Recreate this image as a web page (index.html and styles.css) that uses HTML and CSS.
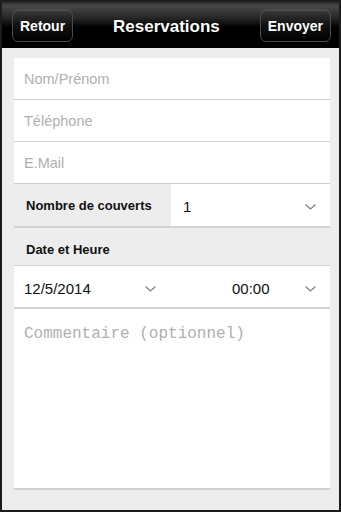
FILE: index.html
```html
<!DOCTYPE html>
<html lang="fr">
<head>
    <meta charset="UTF-8">
    <meta name="viewport" content="width=device-width, initial-scale=1.0">
    <title>Reservations</title>
    <link rel="stylesheet" href="styles.css">
</head>
<body>
    <div class="header">
        <button class="head-btn">Retour</button>
        <h1>Reservations</h1>
        <button class="head-btn">Envoyer</button>
    </div>
    <form class="content">
        <input class="field" type="text" placeholder="Nom/Prénom">
        <input class="field" type="tel" placeholder="Téléphone">
        <input class="field" type="email" placeholder="E.Mail">
        <div class="row covers">
            <label class="row-label" for="couverts">Nombre de couverts</label>
            <div class="select-box">
                <select id="couverts" class="select">
                    <option>1</option>
                    <option>2</option>
                    <option>3</option>
                    <option>4</option>
                </select>
                <svg class="chevron" width="11" height="6" viewBox="0 0 11 6"><path d="M0.5 0.5 L5.5 5 L10.5 0.5" fill="none" stroke="#808080" stroke-width="1.2"/></svg>
            </div>
        </div>
        <div class="section-label">Date et Heure</div>
        <div class="row datetime">
            <div class="select-box date-box">
                <select class="select">
                    <option>12/5/2014</option>
                </select>
                <svg class="chevron" width="11" height="6" viewBox="0 0 11 6"><path d="M0.5 0.5 L5.5 5 L10.5 0.5" fill="none" stroke="#808080" stroke-width="1.2"/></svg>
            </div>
            <div class="select-box time-box">
                <select class="select">
                    <option>00:00</option>
                </select>
                <svg class="chevron" width="11" height="6" viewBox="0 0 11 6"><path d="M0.5 0.5 L5.5 5 L10.5 0.5" fill="none" stroke="#808080" stroke-width="1.2"/></svg>
            </div>
        </div>
        <textarea class="comment" placeholder="Commentaire (optionnel)"></textarea>
    </form>
</body>
</html>
```

FILE: styles.css
```css
html {
    height: 100%;
}

body {
    margin: 0;
    height: 100%;
    box-sizing: border-box;
    border: 2px solid #1c1c1c;
    background-color: #ededed;
    font-family: "Liberation Sans", Arial, sans-serif;
    overflow: hidden;
}

.header {
    height: 46px;
    display: flex;
    align-items: center;
    justify-content: space-between;
    padding: 0 8px 0 10px;
    background: linear-gradient(#2a2a2a 0, #474747 8%, #262626 35%, #000 55%, #000 100%);
}

.header h1 {
    margin: 3px 0 0;
    color: #fff;
    font-size: 17px;
    font-weight: bold;
    text-shadow: 0 1px 0 #000;
}

.head-btn {
    height: 33px;
    padding: 0 7px;
    margin-top: 1px;
    border: 1px solid #4a4a4a;
    border-radius: 6px;
    background: linear-gradient(#3a3a3a, #111 50%, #000);
    box-shadow: inset 0 1px 0 rgba(255, 255, 255, 0.12);
    color: #fff;
    font-family: "Liberation Sans", Arial, sans-serif;
    font-size: 14px;
    font-weight: bold;
    cursor: pointer;
}

.content {
    padding: 10px 9px 0 12px;
    margin: 0;
}

.field {
    display: block;
    width: 100%;
    box-sizing: border-box;
    height: 42px;
    margin: 0;
    padding: 1px 10px 0;
    border: 0;
    border-bottom: 1px solid #d2d2d2;
    background: #fff;
    font-family: "Liberation Sans", Arial, sans-serif;
    font-size: 14.5px;
    color: #222;
    outline: none;
}

.field::placeholder {
    color: #b0b0b0;
}

.row {
    display: flex;
    background: #fff;
    border-bottom: 2px solid #d2d2d2;
}

.covers {
    height: 42px;
}

.row-label {
    width: 157px;
    flex-shrink: 0;
    display: flex;
    align-items: center;
    padding-left: 12px;
    box-sizing: border-box;
    background: #ededed;
    font-size: 13px;
    font-weight: bold;
    color: #111;
}

.section-label {
    height: 38px;
    display: flex;
    align-items: center;
    padding: 5px 0 0 12px;
    box-sizing: border-box;
    border-bottom: 1px solid #d2d2d2;
    font-size: 13px;
    font-weight: bold;
    color: #111;
}

.select-box {
    position: relative;
    flex: 1;
    display: flex;
}

.select {
    flex: 1;
    appearance: none;
    -webkit-appearance: none;
    border: 0;
    margin: 0;
    background: transparent;
    font-family: "Liberation Sans", Arial, sans-serif;
    font-size: 15px;
    color: #111;
    padding: 3px 30px 0 12px;
    outline: none;
}

.chevron {
    position: absolute;
    right: 14px;
    top: 50%;
    margin-top: -1px;
    pointer-events: none;
}

.datetime {
    height: 41px;
}

.date-box .select {
    padding-left: 10px;
}

.date-box .chevron {
    right: 16px;
}

.time-box .select {
    padding-left: 60px;
}

.comment {
    display: block;
    width: 100%;
    height: 181px;
    box-sizing: border-box;
    margin: 0;
    padding: 16px 10px;
    border: 0;
    border-bottom: 2px solid #d0d0d0;
    background: #fff;
    resize: none;
    font-family: "Liberation Mono", "Courier New", monospace;
    font-size: 16px;
    color: #222;
    outline: none;
}

.comment::placeholder {
    color: #b0b0b0;
}
```
